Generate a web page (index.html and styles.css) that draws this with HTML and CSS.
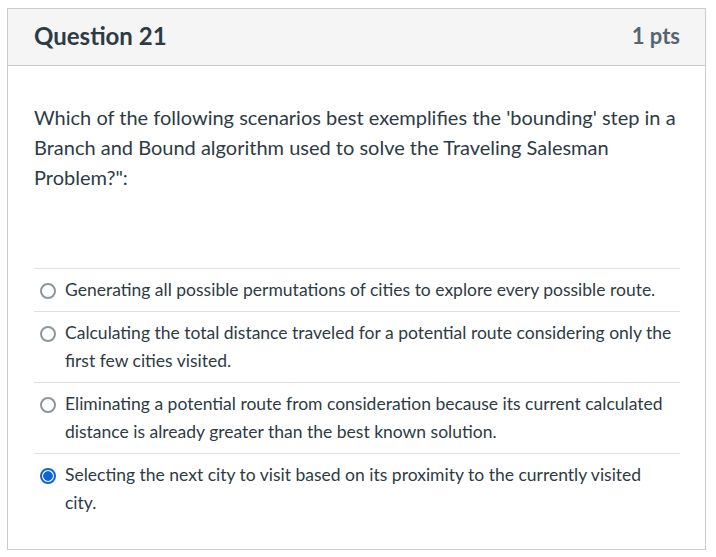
FILE: index.html
```html
<!DOCTYPE html>
<html>
<head>
<meta charset="utf-8">
<link rel="stylesheet" href="styles.css">
</head>
<body>
<div class="quiz">
  <div class="header">
    <h2 class="title">Question 21</h2>
    <div class="pts">1 pts</div>
  </div>
  <div class="content">
    <p class="question">Which of the following scenarios best exemplifies the 'bounding' step in a Branch and Bound algorithm used to solve the Traveling Salesman Problem?":</p>
    <div class="answers">
      <label class="answer"><span class="radio"></span><span class="text">Generating all possible permutations of cities to explore every possible route.</span></label>
      <label class="answer"><span class="radio"></span><span class="text">Calculating the total distance traveled for a potential route considering only the first few cities visited.</span></label>
      <label class="answer"><span class="radio"></span><span class="text">Eliminating a potential route from consideration because its current calculated distance is already greater than the best known solution.</span></label>
      <label class="answer"><span class="radio checked"></span><span class="text">Selecting the next city to visit based on its proximity to the currently visited city.</span></label>
    </div>
  </div>
</div>
</body>
</html>
```
FILE: styles.css
```css
* { box-sizing: border-box; }
body {
  margin: 0;
  background: #fff;
  font-family: Lato, "Noto Sans", sans-serif;
  color: #2d3b45;
}
.quiz {
  margin: 8px 0 0 7px;
  width: 699px;
  height: 542px;
  border: 1px solid #c7cdd1;
}
.header {
  height: 57px;
  background: #f5f5f5;
  border-bottom: 1px solid #c7cdd1;
  display: flex;
  align-items: center;
  justify-content: space-between;
  padding: 0 25px 3px 26px;
}
.title {
  margin: 0;
  font-size: 24px;
  font-weight: 700;
  color: #2d3b45;
}
.pts {
  font-size: 22px;
  font-weight: 700;
  color: #556572;
}
.content {
  padding: 36px 25px 0 26px;
}
.question {
  margin: 0;
  font-size: 20px;
  line-height: 30px;
}
.answers {
  margin-top: 76px;
}
.answer {
  display: flex;
  align-items: flex-start;
  border-top: 1px solid #dde1e4;
  padding: 7px 6px 7px 0;
  font-size: 17.5px;
  line-height: 28px;
}
.radio {
  flex: none;
  width: 16px;
  height: 16px;
  margin: 7px 9px 0 6px;
  border: 2px solid #8b969e;
  border-radius: 50%;
  background: #fff;
}
.radio.checked {
  border-color: #0b63de;
  background: radial-gradient(circle, #0b63de 0 4.5px, #fff 5px);
}
```
